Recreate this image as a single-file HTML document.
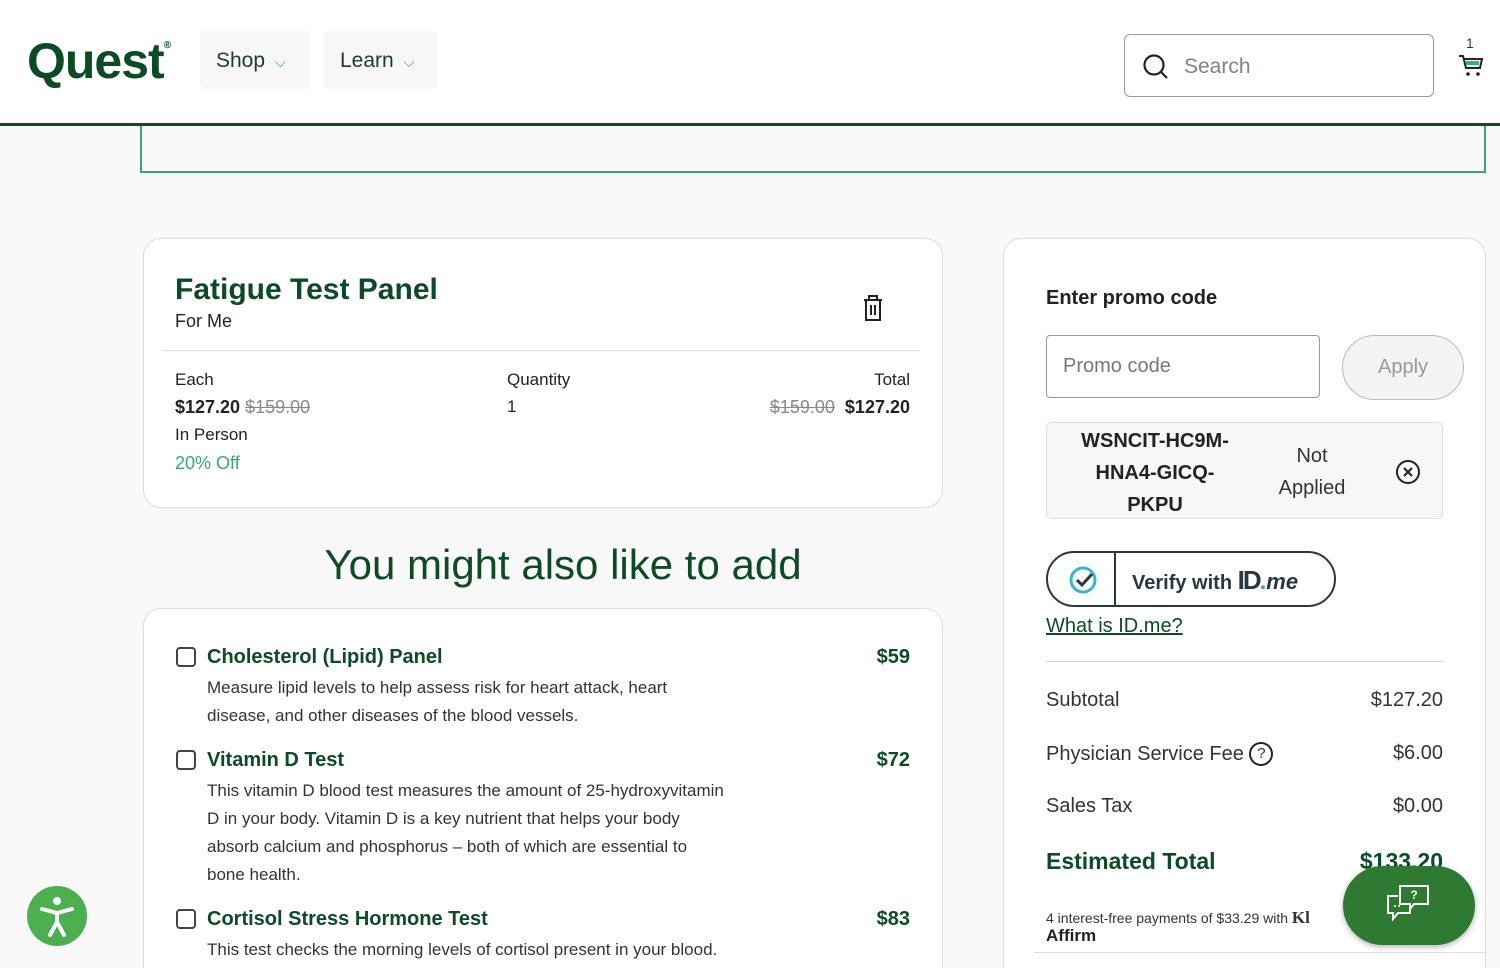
<!DOCTYPE html>
<html><head><meta charset="utf-8"><style>
*{box-sizing:border-box;margin:0;padding:0}
html,body{width:1500px;height:968px;overflow:hidden}
body{background:#f9f9f9;font-family:"Liberation Sans",sans-serif;color:#222;position:relative}
.hdr{position:absolute;left:0;top:0;width:1500px;height:126px;background:#fff;border-bottom:3px solid #0d4a26}
.logo{position:absolute;left:27px;top:32px;font-size:50px;font-weight:bold;color:#0d4a26;letter-spacing:-1px}
.nav{position:absolute;top:31px;height:58px;background:#f7f7f7;border-radius:4px;font-size:21px;color:#1e3a2a;padding:18px 16px}
.nav span.c{color:#3aa57a;font-size:14px;margin-left:10px}
.search{position:absolute;left:1124px;top:34px;width:310px;height:63px;border:1.5px solid #999;border-radius:6px;background:#fff}
.search .t{position:absolute;left:59px;top:20px;font-size:21px;color:#7a8190}
.band{position:absolute;left:140px;top:126px;width:1346px;height:47px;border:2px solid #3aa57a;border-top:none}
.card{position:absolute;background:#fff;border:1.5px solid #ddd;border-radius:18px}
.g{color:#0d4a26}
.abs{position:absolute}
.strike{text-decoration:line-through;color:#888}
.chk{position:absolute;left:32px;width:20px;height:20px;border:2px solid #444;border-radius:4px}
.pt{position:absolute;left:63px;font-size:20px;font-weight:bold;color:#0d4a26}
.pp{position:absolute;right:32px;font-size:20px;font-weight:bold;color:#0d4a26}
.pd{position:absolute;left:63px;font-size:17px;line-height:28px;color:#333;width:660px;white-space:nowrap}
.row{position:absolute;left:42px;right:42px;font-size:20px;color:#333}
.row .r{position:absolute;right:0;top:0}
</style></head><body>
<div class="hdr">
<div class="logo">Quest<sup style="font-size:10px;vertical-align:30px">®</sup></div>
<div class="nav" style="left:200px;width:110px">Shop<span class="c">⌵</span></div>
<div class="nav" style="left:324px;width:113px">Learn<span class="c">⌵</span></div>
<div class="search"><svg class="abs" style="left:17px;top:18px" width="28" height="28" viewBox="0 0 28 28"><circle cx="12" cy="12" r="9.5" fill="none" stroke="#222" stroke-width="2.2"/><path d="M19 19l6 6" stroke="#222" stroke-width="2.2"/></svg><div class="t">Search</div></div>
<div class="abs" style="left:1466px;top:35px;font-size:14px;color:#333">1</div>
<svg class="abs" style="left:1457px;top:53px" width="28" height="26" viewBox="0 0 28 26"><path d="M2 3h4l3 12h14l2-9H7" fill="none" stroke="#222" stroke-width="2"/><rect x="9" y="8" width="13" height="4" fill="#2bb673"/><circle cx="11" cy="21" r="1.8" fill="#222"/><circle cx="21" cy="21" r="1.8" fill="#222"/></svg>
</div>
<div class="band"></div>

<div class="card" style="left:143px;top:238px;width:800px;height:270px">
<div class="abs g" style="left:31px;top:34px;font-size:30px;font-weight:bold">Fatigue Test Panel</div>
<div class="abs" style="left:31px;top:72px;font-size:18px">For Me</div>
<svg class="abs" style="left:717px;top:55px" width="24" height="28" viewBox="0 0 24 28"><path d="M3 6h18M8 6V2h8v4M5 6v20h14V6M10 11v10M14 11v10" fill="none" stroke="#222" stroke-width="2"/></svg>
<div class="abs" style="left:19px;right:22px;top:111px;border-top:1.5px solid #ddd"></div>
<div class="abs" style="left:31px;top:131px;font-size:17px">Each</div>
<div class="abs" style="left:31px;top:158px;font-size:18px"><b>$127.20</b> <span class="strike">$159.00</span></div>
<div class="abs" style="left:31px;top:186px;font-size:17px">In Person</div>
<div class="abs" style="left:31px;top:214px;font-size:18px;color:#3aa57a">20% Off</div>
<div class="abs" style="left:363px;top:131px;font-size:17px">Quantity</div>
<div class="abs" style="left:363px;top:158px;font-size:17px">1</div>
<div class="abs" style="right:32px;top:131px;font-size:17px">Total</div>
<div class="abs" style="right:32px;top:158px;font-size:18px"><span class="strike">$159.00</span> &nbsp;<b>$127.20</b></div>
</div>

<div class="abs g" style="left:143px;width:840px;text-align:center;top:541px;font-size:42px;color:#0d4a26">You might also like to add</div>

<div class="card" style="left:143px;top:608px;width:800px;height:400px">
<div class="chk" style="top:38px"></div><div class="pt" style="top:37px">Cholesterol (Lipid) Panel</div><div class="pp" style="top:37px">$59</div>
<div class="pd" style="top:65px">Measure lipid levels to help assess risk for heart attack, heart<br>disease, and other diseases of the blood vessels.</div>
<div class="chk" style="top:141px"></div><div class="pt" style="top:140px">Vitamin D Test</div><div class="pp" style="top:140px">$72</div>
<div class="pd" style="top:168px">This vitamin D blood test measures the amount of 25-hydroxyvitamin<br>D in your body. Vitamin D is a key nutrient that helps your body<br>absorb calcium and phosphorus – both of which are essential to<br>bone health.</div>
<div class="chk" style="top:300px"></div><div class="pt" style="top:299px">Cortisol Stress Hormone Test</div><div class="pp" style="top:299px">$83</div>
<div class="pd" style="top:327px">This test checks the morning levels of cortisol present in your blood.</div>
</div>

<div class="card" style="left:1003px;top:238px;width:483px;height:760px">
<div class="abs" style="left:42px;top:48px;font-size:20px;font-weight:bold;color:#222">Enter promo code</div>
<div class="abs" style="left:42px;top:96px;width:274px;height:63px;border:1.5px solid #999;border-radius:4px;padding:19px 16px;font-size:20px;color:#777">Promo code</div>
<div class="abs" style="left:338px;top:96px;width:122px;height:65px;border:1.5px solid #bbb;border-radius:33px;background:#f3f3f3;text-align:center;line-height:62px;font-size:20px;color:#999">Apply</div>
<div class="abs" style="left:42px;top:183px;width:397px;height:97px;border:1.5px solid #ddd;border-radius:5px;background:#f7f7f7">
<div class="abs" style="left:0;width:216px;top:2px;text-align:center;font-size:20px;font-weight:bold;line-height:32px;color:#222">WSNCIT-HC9M-<br>HNA4-GICQ-<br>PKPU</div>
<div class="abs" style="left:210px;width:110px;top:17px;text-align:center;font-size:20px;line-height:32px;color:#333">Not<br>Applied</div>
<svg class="abs" style="left:348px;top:36px" width="26" height="26" viewBox="0 0 26 26"><circle cx="13" cy="13" r="11" fill="none" stroke="#222" stroke-width="2"/><path d="M9 9l8 8M17 9l-8 8" stroke="#222" stroke-width="2"/></svg>
</div>
<div class="abs" style="left:42px;top:312px;width:290px;height:56px;border:2px solid #2a3640;border-radius:28px;background:#fff">
<div class="abs" style="left:66px;top:0;height:52px;border-left:2px solid #2a3640"></div>
<svg class="abs" style="left:20px;top:12px" width="30" height="30" viewBox="0 0 30 30"><circle cx="15" cy="15" r="12" fill="none" stroke="#36b8c8" stroke-width="3"/><path d="M9 15l5 5 10-11" fill="none" stroke="#2a3640" stroke-width="3"/></svg>
<div class="abs" style="left:84px;top:12px;font-size:20px;font-weight:bold;color:#2a3640">Verify with <span style="font-size:26px;letter-spacing:-2px">ID</span><span style="color:#2bb673;font-size:24px">.</span><i style="font-size:22px">me</i></div>
</div>
<div class="abs" style="left:42px;top:376px;font-size:20px;color:#0d4a26;text-decoration:underline">What is ID.me?</div>
<div class="abs" style="left:42px;right:42px;top:422px;border-top:1.5px solid #ddd"></div>
<div class="row" style="top:450px">Subtotal<span class="r">$127.20</span></div>
<div class="row" style="top:503px">Physician Service Fee <span style="display:inline-block;width:24px;height:24px;border:2px solid #222;border-radius:50%;font-size:15px;text-align:center;line-height:20px;vertical-align:2px">?</span><span class="r">$6.00</span></div>
<div class="row" style="top:556px">Sales Tax<span class="r">$0.00</span></div>
<div class="row" style="top:609px;font-weight:bold;font-size:23px;color:#0d4a26">Estimated Total<span class="r">$133.20</span></div>
<div class="abs" style="left:42px;top:669px;font-size:14px;color:#333">4 interest-free payments of $33.29 with <b style="font-family:'Liberation Serif',serif;font-size:17px">Kl</b></div>
<div class="abs" style="left:42px;top:687px;font-size:17px;font-weight:bold">Affirm</div>
<div class="abs" style="left:30px;right:0;top:713px;border-top:1.5px solid #ddd"></div>
</div>

<div class="abs" style="left:1343px;top:866px;width:132px;height:79px;border-radius:40px;background:#2e7a32;box-shadow:0 2px 6px rgba(0,0,0,.3)">
<svg class="abs" style="left:42px;top:17px" width="48" height="44" viewBox="0 0 48 44"><path d="M15 3h28v18H29l-4 5v-5h-10z" fill="none" stroke="#fff" stroke-width="2"/><text x="29" y="16" fill="#fff" font-size="12" font-weight="bold" text-anchor="middle" font-family="Liberation Sans">?</text><path d="M13 13H3v17h5v6l5-6h12v-8" fill="none" stroke="#fff" stroke-width="2"/><circle cx="10" cy="23" r="1" fill="#fff"/><circle cx="14" cy="23" r="1" fill="#fff"/></svg>
</div>
<div class="abs" style="left:27px;top:886px;width:60px;height:60px;border-radius:50%;background:#4caf50"><svg width="60" height="60" viewBox="0 0 60 60"><circle cx="30" cy="15" r="4" fill="#fff"/><path d="M15 23l15 4 15-4M30 27v9l-7 13M30 36l7 13" fill="none" stroke="#fff" stroke-width="4" stroke-linecap="round"/></svg></div>
</body></html>
